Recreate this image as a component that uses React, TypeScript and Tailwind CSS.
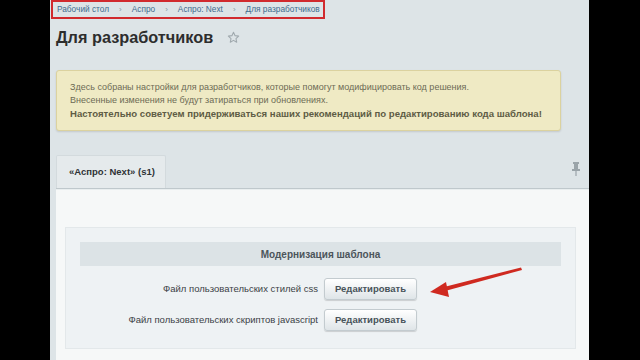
import React from "react";

function Star() {
  return (
    <svg width="13" height="13" viewBox="0 0 24 24" fill="none" stroke="#a0a9ae" strokeWidth="2" strokeLinejoin="round">
      <path d="M12 2.5l2.9 6.1 6.6.8-4.9 4.6 1.3 6.6L12 17.3l-5.9 3.3 1.3-6.6-4.9-4.6 6.6-.8z" />
    </svg>
  );
}

function Pin() {
  return (
    <svg width="10" height="14" viewBox="0 0 10 14" fill="#9aa4a9">
      <rect x="2" y="0" width="6" height="2" />
      <rect x="3" y="2" width="4" height="5" />
      <rect x="1" y="7" width="8" height="2" />
      <rect x="4.4" y="9" width="1.2" height="5" />
    </svg>
  );
}

function Btn() {
  return (
    <button className="w-[93px] h-[22px] rounded-[3px] border border-[#c3cbcf] bg-gradient-to-b from-[#ffffff] to-[#dfe5e8] shadow-[0_1px_1px_rgba(0,0,0,0.15)] text-[9.5px] font-bold text-[#48535a] flex items-center justify-center">
      Редактировать
    </button>
  );
}

export default function App() {
  const crumbs = ["Рабочий стол", "Аспро", "Аспро: Next", "Для разработчиков"];
  return (
    <div className="w-[640px] h-[360px] bg-black flex overflow-hidden font-['Liberation_Sans',Arial,sans-serif]">
      <div className="ml-[50px] w-[539px] h-full bg-[#dde4e7] flex flex-col relative">
        <div className="ml-[1px] w-[274px] h-[19px] border-2 border-[#d12a2e] flex items-center pl-[4px] text-[8.3px] text-[#3f6b8e]">
          {crumbs.map((c, i) => (
            <React.Fragment key={c}>
              {i > 0 && <span className="mx-[10px] text-[#8a99a3] text-[8px]">›</span>}
              <span>{c}</span>
            </React.Fragment>
          ))}
        </div>
        <div className="mt-[8px] ml-[6px] flex items-center h-[20px]">
          <h1 className="text-[16.3px] font-bold text-[#2d2d2d] leading-none">Для разработчиков</h1>
          <span className="ml-[14px] mt-[1px]">
            <Star />
          </span>
        </div>
        <div className="mt-[23px] ml-[6px] w-[505px] h-[61px] rounded-[3px] border border-[#dbd29f] bg-[#efeac4] shadow-[0_1px_2px_rgba(0,0,0,0.12)] pl-[13px] pt-[10px] text-[9px] leading-[13px] text-[#6d6b55]">
          <div>Здесь собраны настройки для разработчиков, которые помогут модифицировать код решения.</div>
          <div>Внесенные изменения не будут затираться при обновлениях.</div>
          <div className="font-bold text-[9.6px] text-[#5e5c45]">Настоятельно советуем придерживаться наших рекомендаций по редактированию кода шаблона!</div>
        </div>
        <div className="mt-[24px] ml-[6px] flex flex-col flex-1">
          <div className="h-[34px] flex items-end border-b border-[#bfc8cc] relative">
            <div className="w-[110px] h-[33px] bg-[#e5eaec] border border-b-0 border-[#d3dadd] rounded-t-[2px] flex items-center pl-[12px] text-[9.5px] font-bold text-[#2f3336]">
              «Аспро: Next» (s1)
            </div>
            <div className="absolute right-[8px] top-[7px]">
              <Pin />
            </div>
          </div>
          <div className="flex-1 bg-[#f6f8f8] border-t border-[#e9eeef] pt-[37px] pl-[9px] pr-[13px] relative">
            <div className="w-[511px] h-[122px] bg-[#eef2f4] border border-[#e3e8ea] pt-[14px] px-[14px]">
              <div className="h-[24px] bg-[#dce3e6] flex items-center justify-center text-[10px] font-bold text-[#4c555b]">
                Модернизация шаблона
              </div>
              <div className="mt-[12px] flex items-center h-[22px]">
                <div className="w-[238px] text-right text-[9.5px] text-[#3b4145]">Файл пользовательских стилей css</div>
                <div className="ml-[6px]"><Btn /></div>
              </div>
              <div className="mt-[9px] flex items-center h-[22px]">
                <div className="w-[238px] text-right text-[9.5px] text-[#3b4145]">Файл пользовательских скриптов javascript</div>
                <div className="ml-[6px]"><Btn /></div>
              </div>
            </div>
          </div>
        </div>
        <svg className="absolute left-0 top-0" width="539" height="360" viewBox="0 0 539 360">
          <polygon points="471,267.5 472,270 395,291 394,287" fill="#cf2a20" />
          <polygon points="380,292 396,282 399,297" fill="#cf2a20" />
        </svg>
      </div>
    </div>
  );
}
